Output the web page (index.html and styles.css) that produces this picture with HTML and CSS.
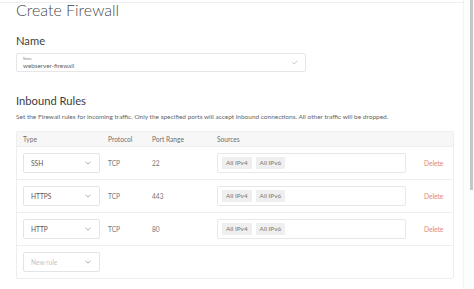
FILE: index.html
```html
<!DOCTYPE html>
<html lang="en">
  <head>
    <meta charset="UTF-8" />
    <meta name="viewport" content="width=device-width, initial-scale=1.0" />
    <title>Create Firewall</title>
    <link rel="stylesheet" href="styles.css">
  </head>
  <body>
    <div class="topbar"></div>
    <main class="page">
      <h1 class="page-title">Create Firewall</h1>

      <section class="section">
        <h2 class="section-title">Name</h2>
        <div class="field">
          <div class="field-text">
            <label class="field-label">Name</label>
            <div class="field-value">webserver-firewall</div>
          </div>
          <svg class="field-check" width="6" height="5" viewBox="0 0 6 5" fill="none">
            <polyline points="0.6,2.6 2.2,4 5.4,0.8" stroke="#a9b3b3" stroke-width="0.7" />
          </svg>
        </div>
      </section>

      <section class="section section--rules">
        <h2 class="section-title">Inbound Rules</h2>
        <p class="section-desc">Set the Firewall rules for incoming traffic. Only the specified ports will accept inbound connections. All other traffic will be dropped.</p>

        <div class="rules">
          <div class="rules-row rules-head">
            <div>Type</div>
            <div>Protocol</div>
            <div>Port Range</div>
            <div>Sources</div>
            <div></div>
          </div>

          <div class="rules-row">
            <div class="select">
              <span>SSH</span>
              <svg class="chevron" width="6" height="4" viewBox="0 0 6 4" fill="none">
                <polyline points="0.5,0.8 3,3.2 5.5,0.8" stroke="#8a8a8a" stroke-width="0.7" />
              </svg>
            </div>
            <div>TCP</div>
            <div>22</div>
            <div class="sources">
              <span class="tag">All IPv4</span>
              <span class="tag">All IPv6</span>
            </div>
            <div class="delete">Delete</div>
          </div>

          <div class="rules-row">
            <div class="select">
              <span>HTTPS</span>
              <svg class="chevron" width="6" height="4" viewBox="0 0 6 4" fill="none">
                <polyline points="0.5,0.8 3,3.2 5.5,0.8" stroke="#8a8a8a" stroke-width="0.7" />
              </svg>
            </div>
            <div>TCP</div>
            <div>443</div>
            <div class="sources">
              <span class="tag">All IPv4</span>
              <span class="tag">All IPv6</span>
            </div>
            <div class="delete">Delete</div>
          </div>

          <div class="rules-row">
            <div class="select">
              <span>HTTP</span>
              <svg class="chevron" width="6" height="4" viewBox="0 0 6 4" fill="none">
                <polyline points="0.5,0.8 3,3.2 5.5,0.8" stroke="#8a8a8a" stroke-width="0.7" />
              </svg>
            </div>
            <div>TCP</div>
            <div>80</div>
            <div class="sources">
              <span class="tag">All IPv4</span>
              <span class="tag">All IPv6</span>
            </div>
            <div class="delete">Delete</div>
          </div>

          <div class="rules-row">
            <div class="select select--empty">
              <span>New rule</span>
              <svg class="chevron" width="6" height="4" viewBox="0 0 6 4" fill="none">
                <polyline points="0.5,0.8 3,3.2 5.5,0.8" stroke="#8a8a8a" stroke-width="0.7" />
              </svg>
            </div>
            <div></div>
            <div></div>
            <div></div>
            <div></div>
          </div>
        </div>
      </section>
    </main>

    <!-- スクロールバー (画面の上に重なる) -->
    <div class="scrollbar">
      <div class="scrollbar-thumb"></div>
    </div>
  </body>
</html>
```

FILE: styles.css
```css
/* ページ全体 */
html,
body {
  overflow: hidden;
}

body {
  margin: 0;
  font-family: Lato, "Noto Sans", sans-serif;
  color: #444;
  background: #ffffff;
}

.topbar {
  height: 2px;
  border-bottom: 1px solid #eeeeee;
}

.page {
  padding: 0 0 0 16px;
  width: 438px;
}

/* タイトル */
.page-title {
  margin: -2px 0 0;
  font-size: 16px;
  line-height: 18px;
  font-weight: 300;
  color: #4a4a4a;
}

.section {
  margin-top: 15px;
}

.section--rules {
  margin-top: 22px;
}

.section-title {
  margin: 0;
  font-size: 11.2px;
  line-height: 13px;
  font-weight: 400;
  color: #3d3d3d;
}

.section-desc {
  margin: 6px 0 0;
  font-size: 6.5px;
  line-height: 8px;
  color: #666;
}

/* 名前の入力欄 */
.field {
  margin-top: 6px;
  width: 290px;
  height: 19px;
  box-sizing: border-box;
  border: 1px solid #e6e6e6;
  border-radius: 2px;
  padding: 0 7px 0 6px;
  display: flex;
  align-items: center;
  justify-content: space-between;
}

.field-label {
  display: block;
  font-size: 3.4px;
  line-height: 4px;
  color: #888;
}

.field-value {
  margin-top: 1px;
  font-size: 6.3px;
  line-height: 7px;
  color: #666;
}

/* ルールの表 */
.rules {
  margin-top: 10px;
  border: 1px solid #eeeeee;
  border-radius: 2px;
}

.rules-row {
  display: grid;
  grid-template-columns: 85px 44px 65px 207px auto;
  align-items: center;
  height: 32px;
  padding: 0 10px 0 6px;
  border-top: 1px solid #eeeeee;
  font-size: 6.6px;
  color: #777;
}

.rules-head {
  height: 14px;
  border-top: none;
  background: #f7f7f7;
  color: #6f6f6f;
}

.select {
  width: 77px;
  height: 20px;
  box-sizing: border-box;
  border: 1px solid #e4e4e4;
  border-radius: 2px;
  padding: 0 8px 0 7px;
  display: flex;
  align-items: center;
  justify-content: space-between;
  color: #555;
}

.select--empty {
  color: #c4c4c4;
}

.sources {
  width: 189px;
  height: 20px;
  box-sizing: border-box;
  border: 1px solid #e8e8e8;
  border-radius: 2px;
  padding: 0 4px;
  display: flex;
  align-items: center;
  gap: 4px;
}

.tag {
  height: 12px;
  line-height: 12px;
  padding: 0 4px;
  background: #efefef;
  border-radius: 1px;
  color: #777;
  font-size: 6.4px;
}

.delete {
  color: #e0877c;
}

/* スクロールバー */
.scrollbar {
  position: fixed;
  top: 0;
  right: 0;
  width: 10px;
  height: 100%;
  background: #fdfdfd;
  border-left: 1px solid #f2f2f2;
}

.scrollbar-thumb {
  margin-left: 6px;
  width: 3px;
  height: 190px;
  background: #c6c6c6;
}
```
